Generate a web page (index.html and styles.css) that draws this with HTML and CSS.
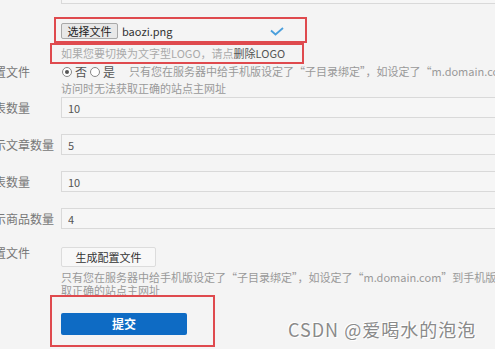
FILE: index.html
```html
<!DOCTYPE html>
<html lang="zh-CN">
<head>
  <meta charset="UTF-8">
  <meta name="viewport" content="width=device-width, initial-scale=1">
  <title>手机版设置</title>
  <link rel="stylesheet" href="styles.css">
</head>
<body>
  <div class="form">
    <div class="row row-top">
      <label></label>
      <div class="field"><input class="text" type="text" value=""></div>
    </div>

    <div class="row row-file">
      <label></label>
      <div class="field file">
        <span class="file-btn">选择文件</span>
        <span class="file-name">baozi.png</span>
        <svg class="check" width="14" height="9" viewBox="0 0 14 9">
          <path d="M1 3.5 L5.5 7.5 L13 1" fill="none" stroke="#4a9fdc" stroke-width="1.8"/>
        </svg>
      </div>
    </div>

    <div class="row row-hint">
      <label></label>
      <div class="field hint">如果您要切换为文字型LOGO，请点<a>删除LOGO</a></div>
    </div>

    <div class="row row-radio">
      <label>配置文件</label>
      <div class="field desc">
        <div class="line">
          <span class="radio on"></span><span class="opt">否</span>
          <span class="radio"></span><span class="opt">是</span>
          <span class="note">只有您在服务器中给手机版设定了“子目录绑定”，如设定了“m.domain.com”到手机版目录，否则会导致</span>
        </div>
        <div class="line note">访问时无法获取正确的站点主网址</div>
      </div>
    </div>

    <div class="row row-input first">
      <label>列表数量</label>
      <div class="field"><input class="text" type="text" value="10"></div>
    </div>
    <div class="row row-input">
      <label>显示文章数量</label>
      <div class="field"><input class="text" type="text" value="5"></div>
    </div>
    <div class="row row-input">
      <label>列表数量</label>
      <div class="field"><input class="text" type="text" value="10"></div>
    </div>
    <div class="row row-input">
      <label>显示商品数量</label>
      <div class="field"><input class="text" type="text" value="4"></div>
    </div>

    <div class="row row-gen">
      <label>配置文件</label>
      <div class="field"><button class="gen-btn">生成配置文件</button></div>
    </div>
    <div class="row row-note">
      <label></label>
      <div class="field note">
        <div>只有您在服务器中给手机版设定了“子目录绑定”，如设定了“m.domain.com”到手机版目录，否则会导致访问时无法获</div>
        <div>取正确的站点主网址</div>
      </div>
    </div>

    <div class="row row-submit">
      <label></label>
      <div class="field"><button class="submit">提交</button></div>
    </div>
  </div>

  <!-- annotation boxes -->
  <div class="mark mark-file"></div>
  <div class="mark mark-hint"></div>
  <div class="mark mark-submit"></div>

  <div class="watermark">CSDN @爱喝水的泡泡</div>
</body>
</html>
```

FILE: styles.css
```css
html, body {
  margin: 0;
  height: 100%;
  overflow: hidden;
}
body {
  background: #f4f4f4;
  font-family: "Noto Sans CJK SC", "Noto Sans", sans-serif;
  color: #555;
  position: relative;
}

.form {
  margin-left: -18px;
  width: 620px;
}
.row {
  display: grid;
  grid-template-columns: 79px 540px;
  align-items: center;
}
.row label {
  font-size: 12px;
  color: #777;
  line-height: 16px;
  white-space: nowrap;
}

.text {
  display: block;
  box-sizing: border-box;
  width: 100%;
  height: 21px;
  margin: 0;
  padding: 0 6px;
  border: 1px solid #d9d9d9;
  background: #f6f6f6;
  font-family: inherit;
  font-size: 11px;
  color: #555;
  outline: none;
}

.row-top { margin-top: -17px; }

.row-file { margin-top: 19px; }
.file {
  display: flex;
  align-items: center;
  height: 16px;
}
.file-btn {
  box-sizing: border-box;
  flex-shrink: 0;
  width: 57px;
  height: 16px;
  border: 1px solid #a9a9a9;
  border-radius: 2px;
  background: #e8e8e8;
  font-size: 11px;
  line-height: 14px;
  text-align: center;
  color: #222;
}
.file-name {
  width: 148px;
  margin-left: 4px;
  font-size: 11px;
  line-height: 14px;
  color: #333;
}
.check { margin-top: 1px; }

.row-hint { margin-top: 7px; }
.hint {
  font-size: 11px;
  line-height: 14px;
  color: #aaa;
  white-space: nowrap;
}
.hint a { color: #555; }

.row-radio { margin-top: 3px; align-items: start; }
.row-radio label { line-height: 17px; }
.desc .line {
  display: flex;
  align-items: center;
  height: 17px;
  white-space: nowrap;
}
.radio {
  box-sizing: border-box;
  flex-shrink: 0;
  width: 10px;
  height: 10px;
  margin-left: 1px;
  border: 1px solid #888;
  border-radius: 50%;
  background: #fff;
  position: relative;
}
.radio.on::after {
  content: "";
  position: absolute;
  left: 2px;
  top: 2px;
  width: 4px;
  height: 4px;
  border-radius: 50%;
  background: #555;
}
.opt {
  flex-shrink: 0;
  font-size: 12px;
  line-height: 17px;
  color: #555;
  margin: 0 3px;
}
.opt + .radio { margin-left: 0; }
.desc .note { margin-left: 11px; }
.note {
  font-size: 11px;
  line-height: 17px;
  color: #999;
  white-space: nowrap;
}
.desc .line.note { margin-left: 0; }

.row-input { margin-top: 16px; }
.row-input.first { margin-top: 0; }

.row-gen { margin-top: 18px; }
.row-gen label { align-self: start; margin-top: -2px; }
.gen-btn {
  display: block;
  box-sizing: border-box;
  width: 95px;
  height: 20px;
  padding: 0;
  border: 1px solid #dcdcdc;
  border-radius: 2px;
  background: #f8f8f8;
  font-family: inherit;
  font-size: 11px;
  line-height: 18px;
  color: #333;
}

.row-note { margin-top: 4px; }
.row-note .note div { line-height: 13px; }

.row-submit { margin-top: 16px; }
.submit {
  display: block;
  box-sizing: border-box;
  width: 126px;
  height: 22px;
  padding: 0;
  border: none;
  border-radius: 2px;
  background: #0e6bc4;
  color: #fff;
  font-family: inherit;
  font-size: 12px;
  line-height: 22px;
  font-weight: bold;
}

.mark {
  position: absolute;
  box-sizing: border-box;
  border: 2px solid #df4a4e;
}
.mark-file { left: 54px; top: 17px; width: 253px; height: 26px; }
.mark-hint { left: 50px; top: 43px; width: 254px; height: 21px; }
.mark-submit { left: 50px; top: 295px; width: 165px; height: 52px; }

.watermark {
  position: absolute;
  left: 288px;
  top: 316px;
  font-size: 18px;
  line-height: 26px;
  letter-spacing: 1px;
  color: #8a8a8a;
  text-shadow: 1px 1px 0 #fff, -1px -1px 0 #fff;
  white-space: nowrap;
}
```
